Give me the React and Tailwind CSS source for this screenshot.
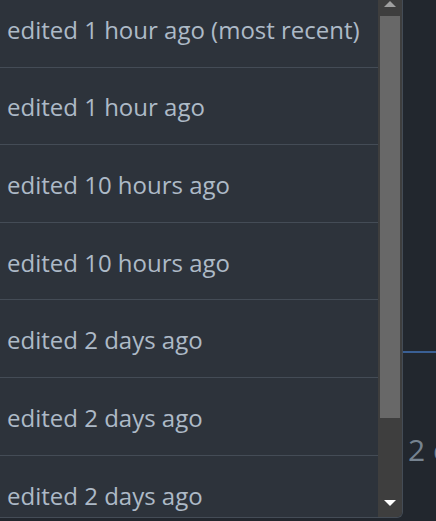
const edits = [
  'edited 1 hour ago (most recent)',
  'edited 1 hour ago',
  'edited 10 hours ago',
  'edited 10 hours ago',
  'edited 2 days ago',
  'edited 2 days ago',
  'edited 2 days ago',
];

function Row({ label, last }) {
  return (
    <div
      className={
        'h-[77.6px] shrink-0 flex items-center pl-[7px] pt-[3px] ' +
        (last ? '' : 'border-b border-[#444c56]')
      }
    >
      <span className="text-[24px] leading-[30px] text-[#adbac7] whitespace-nowrap">{label}</span>
    </div>
  );
}

function Scrollbar() {
  return (
    <div className="w-[24px] shrink-0 bg-[#3e3e3e] flex flex-col items-center">
      <div className="h-[16px] w-full flex items-start justify-center pt-[1px]">
        <div className="w-0 h-0 border-l-[6px] border-r-[6px] border-b-[6px] border-l-transparent border-r-transparent border-b-[#a0a0a0]" />
      </div>
      <div className="w-[20px] h-[402px] bg-[#686868]" />
      <div className="flex-1" />
      <div className="h-[18px] w-full flex items-start justify-center pt-[1px]">
        <div className="w-0 h-0 border-l-[6px] border-r-[6px] border-t-[6px] border-l-transparent border-r-transparent border-t-white" />
      </div>
    </div>
  );
}

export default function App() {
  return (
    <div
      className="w-[436px] h-[521px] bg-[#22272e] overflow-hidden flex"
      style={{ fontFamily: '"Open Sans", "Noto Sans", sans-serif' }}
    >
      <div className="w-[403px] h-[518px] shrink-0 flex bg-[#2d333b] border-r border-b border-[#444c56] rounded-br-[6px] overflow-hidden">
        <div className="flex-1 overflow-hidden">
          <div className="-mt-[10px] flex flex-col">
            {edits.map((e, i) => (
              <Row key={i} label={e} last={i === edits.length - 1} />
            ))}
          </div>
        </div>
        <Scrollbar />
      </div>
      <div className="flex-1 flex flex-col overflow-hidden">
        <div className="h-[351px] shrink-0" />
        <div className="h-[2px] bg-[#3a5f94] shrink-0" />
        <div className="pl-[5px] pt-[79px] text-[30px] leading-[36px] text-[#768390] whitespace-nowrap">
          2 c
        </div>
      </div>
    </div>
  );
}
